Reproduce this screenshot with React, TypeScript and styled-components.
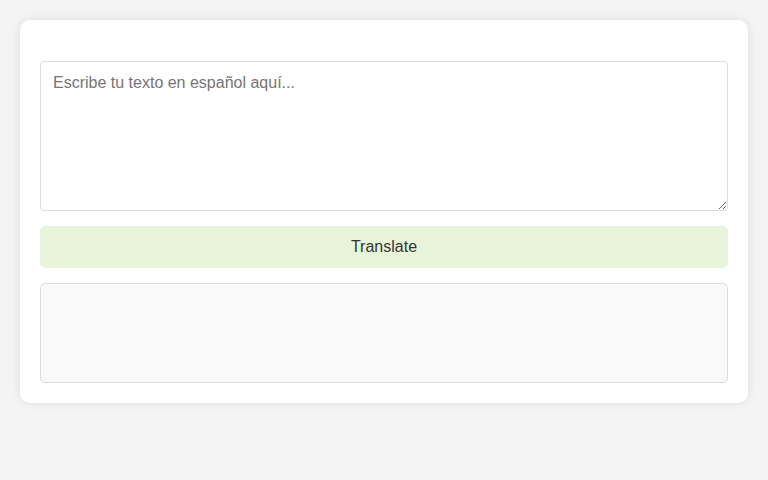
import styled, { createGlobalStyle } from 'styled-components';
import { useState } from 'react';

const GlobalStyle = createGlobalStyle`
  body {
    margin: 0;
    padding: 20px;
    background-color: #f4f4f4;
    font-family: "Liberation Sans", Arial, sans-serif;
  }
`;

export default function App() {
  const [text, setText] = useState('');
  const [result, setResult] = useState('');

  return (
    <>
      <GlobalStyle />
      <Card>
        <Heading />
        <TextInput
          placeholder="Escribe tu texto en español aquí..."
          value={text}
          onChange={(e) => setText(e.target.value)}
        />
        <TranslateButton onClick={() => setResult(text)}>Translate</TranslateButton>
        <Output>{result}</Output>
      </Card>
    </>
  );
}

const Card = styled.div`
  display: flex;
  flex-direction: column;
  background-color: #fff;
  border-radius: 10px;
  box-shadow: 0 0 10px rgba(0, 0, 0, 0.1);
  padding: 20px;
`;

const Heading = styled.div`
  height: 21px;
`;

const TextInput = styled.textarea`
  box-sizing: border-box;
  width: 100%;
  height: 150px;
  padding: 12px;
  font-family: "Liberation Sans", Arial, sans-serif;
  font-size: 16px;
  color: #333;
  border: 1px solid #ddd;
  border-radius: 4px;
  resize: vertical;
  outline: none;

  &::placeholder {
    color: #757575;
  }
`;

const TranslateButton = styled.button`
  margin-top: 15px;
  height: 42px;
  width: 100%;
  border: none;
  border-radius: 5px;
  background-color: #e8f4da;
  color: #333;
  font-family: "Liberation Sans", Arial, sans-serif;
  font-size: 16px;
  cursor: pointer;
`;

const Output = styled.div`
  box-sizing: border-box;
  margin-top: 15px;
  height: 100px;
  padding: 12px;
  background-color: #f9f9f9;
  border: 1px solid #ddd;
  border-radius: 5px;
  font-size: 16px;
  color: #333;
`;
